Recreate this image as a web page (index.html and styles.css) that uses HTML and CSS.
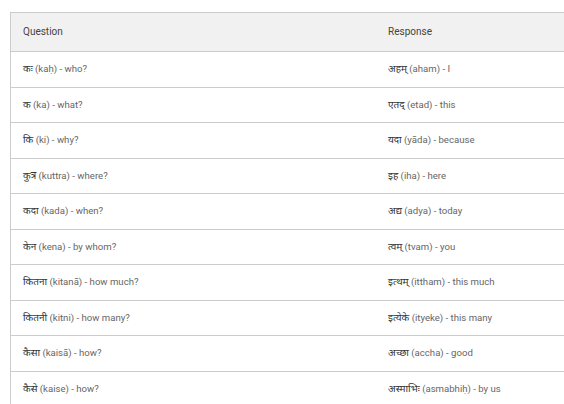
FILE: index.html
```html
<!DOCTYPE html>
<html lang="en">
<head>
<meta charset="utf-8">
<link rel="stylesheet" href="styles.css">
</head>
<body>
<div class="wrap">
<table class="qa">
  <thead>
    <tr><th class="c1">Question</th><th class="c2">Response</th></tr>
  </thead>
  <tbody>
    <tr><td><span class="dev">कः</span> (kaḥ) - who?</td><td><span class="dev">अहम्</span> (aham) - I</td></tr>
    <tr><td><span class="dev">क</span> (ka) - what?</td><td><span class="dev">एतद्</span> (etad) - this</td></tr>
    <tr><td><span class="dev">कि</span> (ki) - why?</td><td><span class="dev">यदा</span> (yāda) - because</td></tr>
    <tr><td><span class="dev">कुत्र</span> (kuttra) - where?</td><td><span class="dev">इह</span> (iha) - here</td></tr>
    <tr><td><span class="dev">कदा</span> (kada) - when?</td><td><span class="dev">अद्य</span> (adya) - today</td></tr>
    <tr><td><span class="dev">केन</span> (kena) - by whom?</td><td><span class="dev">त्वम्</span> (tvam) - you</td></tr>
    <tr><td><span class="dev">कितना</span> (kitanā) - how much?</td><td><span class="dev">इत्थम्</span> (ittham) - this much</td></tr>
    <tr><td><span class="dev">कितनी</span> (kitni) - how many?</td><td><span class="dev">इत्येके</span> (ityeke) - this many</td></tr>
    <tr><td><span class="dev">कैसा</span> (kaisā) - how?</td><td><span class="dev">अच्छा</span> (accha) - good</td></tr>
    <tr><td><span class="dev">कैसे</span> (kaise) - how?</td><td><span class="dev">अस्माभिः</span> (asmabhiḥ) - by us</td></tr>
  </tbody>
</table>
</div>
</body>
</html>
```
FILE: styles.css
```css
html, body {
  margin: 0;
  padding: 0;
  background: #ffffff;
  overflow: hidden;
}
.wrap {
  width: 564px;
  overflow: hidden;
  padding: 12px 0 0 10px;
  box-sizing: border-box;
}
.qa {
  border-collapse: collapse;
  width: 620px;
  font-family: Roboto, "Noto Sans", "Noto Sans Devanagari", sans-serif;
  font-size: 9.6px;
  color: #666666;
}
.qa th,
.qa td {
  text-align: left;
  padding: 0 12px;
  border-top: 1px solid #cccccc;
  border-bottom: 1px solid #cccccc;
  vertical-align: middle;
  line-height: 12px;
}
.qa th:first-child,
.qa td:first-child {
  border-left: 1px solid #cccccc;
}
.qa th {
  background: #f1f1f1;
  font-size: 10px;
  font-weight: 400;
  color: #444444;
  height: 38px;
}
.qa td {
  height: 34.5px;
}
.dev {
  font-size: 10px;
  color: #333333;
}
.c1 {
  width: 341px;
}
```
